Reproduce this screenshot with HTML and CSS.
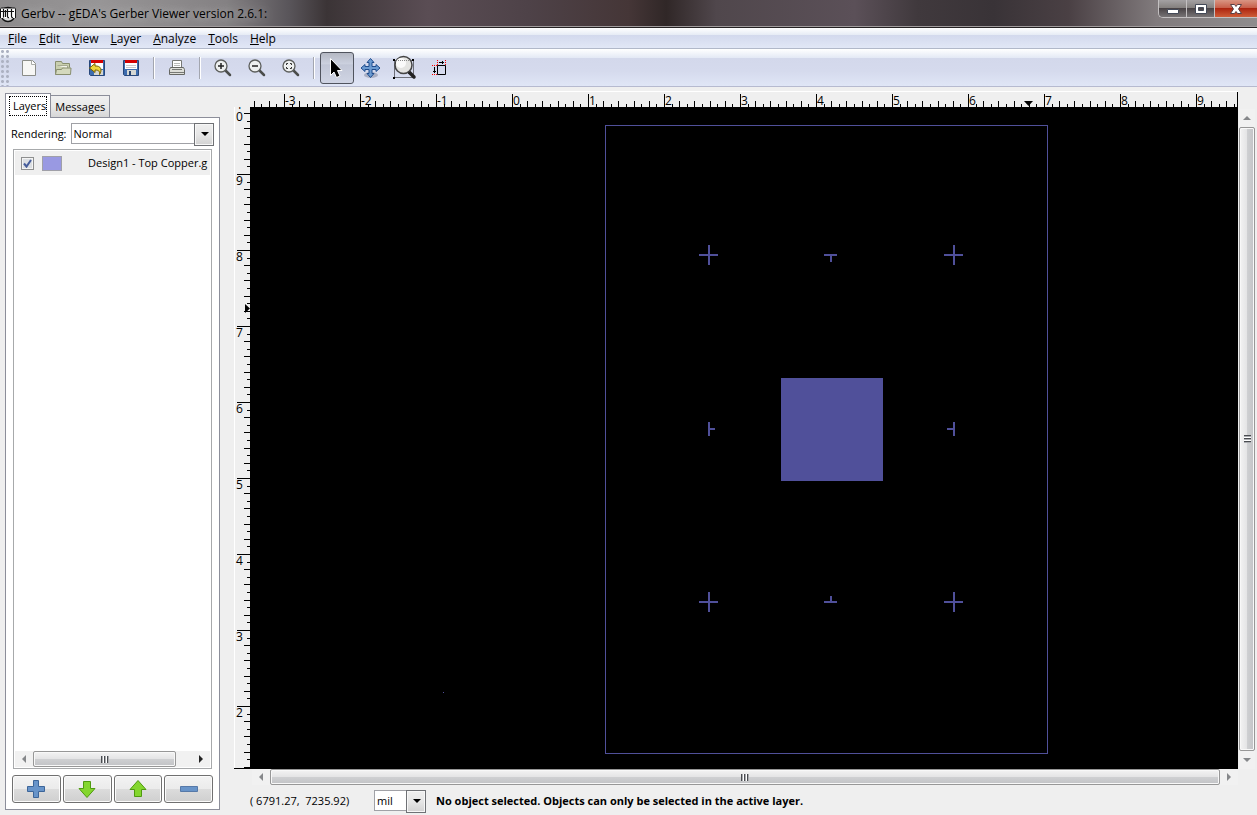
FILE: index.html
```html
<!DOCTYPE html>
<html lang="en">

<head>
    <meta charset="UTF-8">
    <meta name="viewport" content="width=device-width, initial-scale=1.0">
    <title>Gerbv</title>

    <link rel="stylesheet" href="styles.css">
</head>

<body>
    <div class="window">
        <header class="title-bar">
            <svg class="app-icon" width="16" height="18" viewBox="0 0 16 18">
                <circle cx="8" cy="9.500" r="7" fill="#ddd" stroke="#111" stroke-width="1.500" />
                <path d="M0 3h15.500v10H0z" fill="#fff" />
                <path d="M.500 13V4q0-1 1-1h13q1 0 1 1v9" fill="none" stroke="#111" />
                <path d="M1 6.500h13M3.500 4v8.500M7.500 4v7q0 2 1.500 1.500M11.500 4v7q0 2 1.500 1.500M5.500 5v7" fill="none" stroke="#111" stroke-width="1.200" />
            </svg>
            <h1 class="title">Gerbv -- gEDA's Gerber Viewer version 2.6.1:</h1>
            <div class="window-buttons">
                <button class="window-button" aria-label="Minimize">
                    <svg width="14" height="12" viewBox="0 0 14 12"><path d="M1.500 6.500h11v4h-11z" fill="#fff" stroke="#444a58" /></svg>
                </button>
                <button class="window-button" aria-label="Maximize">
                    <svg width="14" height="12" viewBox="0 0 14 12"><path d="M1.500 1.500h11v9h-11zM4.500 4.500v3h5v-3z" fill="#fff" fill-rule="evenodd" stroke="#444a58" /></svg>
                </button>
                <button class="window-button close-button" aria-label="Close">
                    <svg width="14" height="12" viewBox="0 0 14 12"><path d="M1.500 1.500h4L7 3.500l1.500-2h4L9.500 6l3 4.500h-4L7 8.500l-1.500 2h-4l3-4.500z" fill="#fff" stroke="#5b4146" /></svg>
                </button>
            </div>
        </header>

        <nav class="menu-bar">
            <button><u>F</u>ile</button>
            <button><u>E</u>dit</button>
            <button><u>V</u>iew</button>
            <button><u>L</u>ayer</button>
            <button><u>A</u>nalyze</button>
            <button><u>T</u>ools</button>
            <button><u>H</u>elp</button>
        </nav>

        <div class="toolbar">
            <span class="grip"></span>
            <button class="tool" aria-label="New">
                <svg width="24" height="24" viewBox="0 0 24 24">
                    <path d="M5.500 4.500h10l3 3v12h-13z" fill="#f7f7f5" stroke="#8b8d88" stroke-linejoin="round" />
                    <path d="M14.500 4.500v4h4" fill="#fff" stroke="#aaaca8" />
                </svg>
            </button>
            <button class="tool" aria-label="Open">
                <svg width="24" height="24" viewBox="0 0 24 24">
                    <path d="M4.500 18.500v-13h6l1 2h7v4" fill="#c9cfae" stroke="#888e6f" stroke-linejoin="round" />
                    <path d="M6.500 9.500h10v3" fill="#f3f4ea" stroke="#a6aa92" />
                    <path d="M5.500 13.500h5l1-1.500h8.500l-.5 6.500H4.500z" fill="#d4d9bd" stroke="#888e6f" stroke-linejoin="round" />
                </svg>
            </button>
            <button class="tool" aria-label="Revert">
                <svg width="24" height="24" viewBox="0 0 24 24">
                    <path d="M4.500 4.500h15v15h-14l-1-1z" fill="#3d6cae" stroke="#27477b" />
                    <path d="M6 5h12v8H6z" fill="#fff" />
                    <path d="M6 4h12v3H6z" fill="#d40000" />
                    <path d="M9 14h9v5H9z" fill="#d5d7d3" />
                    <path d="M4.500 12l5.500-4.500v2.500c6-.5 7.500 4 4.500 8.500.5-3.500-1-4.500-4.500-4.500v2.500z" fill="#edd43a" stroke="#765e00" />
                </svg>
            </button>
            <button class="tool" aria-label="Save">
                <svg width="24" height="24" viewBox="0 0 24 24">
                    <path d="M4.500 4.500h15v15h-14l-1-1z" fill="#3d6cae" stroke="#27477b" />
                    <path d="M6 5h12v8H6z" fill="#fff" />
                    <path d="M6 4h12v3H6z" fill="#d40000" />
                    <path d="M7 9.500h10M7 11.500h10" stroke="#c7c9cb" />
                    <path d="M8 14h9v5H8z" fill="#d5d7d3" />
                    <path d="M10 15h2v4h-2z" fill="#25426f" />
                </svg>
            </button>
            <span class="separator"></span>
            <button class="tool" aria-label="Print">
                <svg width="24" height="24" viewBox="0 0 24 24">
                    <path d="M7.500 12.500v-8h9v8" fill="#fff" stroke="#777975" />
                    <path d="M9 7.500h6M9 9.500h6" stroke="#b9bbb8" />
                    <path d="M5.500 11.500h13l1 2v5h-15v-5z" fill="#ddded9" stroke="#666864" stroke-linejoin="round" />
                    <path d="M7 13.500h10M5 16.500h14" stroke="#777975" />
                </svg>
            </button>
            <span class="separator"></span>
            <button class="tool" aria-label="Zoom in">
                <svg width="24" height="24" viewBox="0 0 24 24">
                    <path d="M14 14l5 5" stroke="#4b4d4b" stroke-width="2.500" stroke-linecap="round" />
                    <circle cx="10" cy="10" r="6" fill="#eef0f0" stroke="#5c5e5c" stroke-width="1.300" />
                    <path d="M7 10h6M10 7v6" stroke="#222" stroke-width="1.500" />
                </svg>
            </button>
            <button class="tool" aria-label="Zoom out">
                <svg width="24" height="24" viewBox="0 0 24 24">
                    <path d="M14 14l5 5" stroke="#4b4d4b" stroke-width="2.500" stroke-linecap="round" />
                    <circle cx="10" cy="10" r="6" fill="#eef0f0" stroke="#5c5e5c" stroke-width="1.300" />
                    <path d="M7 10h6" stroke="#222" stroke-width="1.500" />
                </svg>
            </button>
            <button class="tool" aria-label="Zoom fit">
                <svg width="24" height="24" viewBox="0 0 24 24">
                    <path d="M14 14l5 5" stroke="#4b4d4b" stroke-width="2.500" stroke-linecap="round" />
                    <circle cx="10" cy="10" r="6" fill="#eef0f0" stroke="#5c5e5c" stroke-width="1.300" />
                    <path d="M7.500 9v-1.500h1.500M11 7.500h1.500v1.500M12.500 11v1.500h-1.500M9 12.500h-1.500v-1.500" fill="none" stroke="#333" />
                </svg>
            </button>
            <span class="separator"></span>
            <button class="tool active" aria-label="Pointer">
                <svg width="24" height="24" viewBox="0 0 24 24">
                    <path d="M5.500 2.500v17l3.500-3.500 2.500 5.500 3.500-1.500-2.500-5.500h4.500z" fill="#000" stroke="#fff" />
                </svg>
            </button>
            <button class="tool" aria-label="Pan">
                <svg width="24" height="24" viewBox="0 0 24 24">
                    <ellipse cx="12" cy="19" rx="7" ry="3" fill="#a9afc3" />
                    <path d="M11.500 2.500l3.500 4h-2v4h4v-2l4 3.500-4 3.500v-2h-4v4h2l-3.500 4-3.500-4h2v-4H6v2L2 12l4-3.500v2h4v-4H8z" fill="#6c9bd1" stroke="#1f4c8d" stroke-linejoin="round" />
                </svg>
            </button>
            <button class="tool" aria-label="Zoom to area">
                <svg width="26" height="26" viewBox="0 0 26 26">
                    <path d="M2.500 5.500h19v17h-19z" fill="none" stroke="#000" stroke-dasharray="1 1" />
                    <path d="M1 4h2v2H1zM20 4h2v2h-2zM1 22h2v2H1z" />
                    <path d="M17 17l5 5" stroke="#222" stroke-width="3.500" stroke-linecap="round" />
                    <circle cx="11.500" cy="10" r="8.500" fill="#e4e4e2" stroke="#444" stroke-width="1.500" />
                    <circle cx="9" cy="8" r="5" fill="#fafafa" />
                    <path d="M6 5.500h11" stroke="#888" stroke-dasharray="1 1" />
                </svg>
            </button>
            <button class="tool" aria-label="Measure">
                <svg width="24" height="24" viewBox="0 0 24 24">
                    <path d="M10.500 9.500h8v9h-8z" fill="none" stroke="#000" />
                    <path d="M10.500 4v5M18.500 4v5M5 9.500h5M5 18.500h5" stroke="#f00" stroke-dasharray="1 1" />
                    <path d="M12 6.500h5M15.500 5v3M7.500 11v6M6 15.500h3" stroke="#000" />
                </svg>
            </button>
        </div>

        <main class="workspace">
            <aside class="sidebar">
                <div class="tabs">
                    <button class="tab selected"><span>Layers</span></button>
                    <button class="tab">Messages</button>
                </div>
                <div class="panel">
                    <div class="rendering">
                        <label for="rendering">Rendering:</label>
                        <div class="combo">
                            <select id="rendering">
                                <option>Normal</option>
                            </select>
                        </div>
                    </div>
                    <div class="layer-list">
                        <label class="layer">
                            <input type="checkbox" checked>
                            <span class="swatch"></span>
                            <span class="layer-name">Design1 - Top Copper.g</span>
                        </label>
                        <div class="scrollbar horizontal">
                            <button class="arrow left" aria-label="Scroll left"></button>
                            <div class="thumb"></div>
                            <span class="track"></span>
                            <button class="arrow right dark" aria-label="Scroll right"></button>
                        </div>
                    </div>
                    <div class="layer-buttons">
                        <button aria-label="Add layer">
                            <svg width="20" height="20" viewBox="0 0 20 20"><path d="M7.500 1.500h5v6h6v5h-6v6h-5v-6h-6v-5h6z" fill="#6894c9" stroke="#3c6599" /></svg>
                        </button>
                        <button aria-label="Move layer down">
                            <svg width="20" height="20" viewBox="0 0 20 20"><path d="M6.500 2.500h7v7h4.500l-8 9-8-9h4.500z" fill="#84d62e" stroke="#4f9a0f" stroke-linejoin="round" /></svg>
                        </button>
                        <button aria-label="Move layer up">
                            <svg width="20" height="20" viewBox="0 0 20 20"><path d="M6.500 17.500h7v-7h4.500l-8-9-8 9h4.500z" fill="#84d62e" stroke="#4f9a0f" stroke-linejoin="round" /></svg>
                        </button>
                        <button aria-label="Remove layer">
                            <svg width="20" height="20" viewBox="0 0 20 20"><path d="M1.500 7.500h17v5h-17z" fill="#6894c9" stroke="#5679a8" /></svg>
                        </button>
                    </div>
                </div>
            </aside>

            <section class="viewer">
                <div class="drawing">
                    <svg class="ruler ruler-top"></svg>
                    <svg class="ruler ruler-left"></svg>
                    <svg class="canvas">
                        <rect class="board" x="355.500" y="18.500" width="442" height="628" />
                        <rect class="copper" x="531" y="271" width="102" height="103" />
                        <path class="copper" d="M449 147h19v2h-19zM458 138h2v20h-2z" />
                        <path class="copper" d="M694 147h19v2h-19zM703 138h2v20h-2z" />
                        <path class="copper" d="M449 494h19v2h-19zM458 485h2v20h-2z" />
                        <path class="copper" d="M694 494h19v2h-19zM703 485h2v20h-2z" />
                        <path class="copper" d="M574 147h13v2h-13zM580 149h2v6h-2z" />
                        <path class="copper" d="M574 494h13v2h-13zM580 489h2v5h-2z" />
                        <path class="copper" d="M458 315h2v14h-2zM460 321h5v2h-5z" />
                        <path class="copper" d="M703 315h2v14h-2zM697 321h6v2h-6z" />
                        <path class="copper" d="M193 585h1v1h-1z" />
                    </svg>
                    <div class="scrollbar vertical">
                        <button class="arrow up" aria-label="Scroll up"></button>
                        <div class="thumb"></div>
                        <button class="arrow down" aria-label="Scroll down"></button>
                    </div>
                    <div class="scrollbar horizontal">
                        <button class="arrow left" aria-label="Scroll left"></button>
                        <div class="thumb"></div>
                        <button class="arrow right" aria-label="Scroll right"></button>
                    </div>
                </div>
                <footer class="status-bar">
                    <span class="coordinates">( 6791.27,&nbsp; 7235.92)</span>
                    <div class="combo unit">
                        <select aria-label="Unit">
                            <option>mil</option>
                        </select>
                    </div>
                    <strong>No object selected. Objects can only be selected in the active layer.</strong>
                </footer>
            </section>
        </main>
    </div>

    <script>
        const SVG = "http://www.w3.org/2000/svg";
        const INCH = 76;

        function add(parent, name, attributes, text) {
            let node = document.createElementNS(SVG, name);
            for (let key in attributes) {
                node.setAttribute(key, attributes[key]);
            }
            if (text) {
                node.textContent = text;
            }
            parent.appendChild(node);
        }

        // every tenth tick is a full one, the even ones are longer than the odd ones
        function tickSize(i) {
            if (i % 10 === 0) return 13;
            return i % 2 === 0 ? 6 : 3;
        }

        function drawTopRuler() {
            let ruler = document.querySelector(".ruler-top");
            let end = ruler.clientWidth;
            let zero = 262;
            for (let i = -34; zero + i * INCH / 10 < end - 1; i++) {
                let x = Math.round(zero + i * INCH / 10);
                let size = tickSize(i);
                add(ruler, "rect", { x: x, y: 16 - size, width: 1, height: size });
                if (i % 10 === 0) {
                    add(ruler, "text", { x: x + 1, y: 14 }, String(i / 10));
                }
            }
            add(ruler, "path", { d: "M774 10h9l-4.500 5z" });
        }

        function drawLeftRuler() {
            let ruler = document.querySelector(".ruler-left");
            let end = ruler.clientHeight;
            let ten = -9;
            for (let i = 0; ten + i * INCH / 10 < end; i++) {
                let y = Math.round(ten + i * INCH / 10);
                let size = tickSize(i);
                add(ruler, "rect", { x: 16 - size, y: y, width: size, height: 1 });
                if (i % 10 === 0) {
                    // digits are stacked, one below the other
                    String(10 - i / 10).split("").forEach(function (digit, n) {
                        add(ruler, "text", { x: 2, y: y + 11 + n * 12 }, digit);
                    });
                }
            }
            add(ruler, "path", { d: "M11 197v9l5-4.500z" });
        }

        drawTopRuler();
        drawLeftRuler();
    </script>
</body>

</html>
```
FILE: styles.css
```css
* {
    box-sizing: border-box;
}

body {
    margin: 0;
    background-color: #efefef;
    color: #000;
    font-family: "Open Sans", "Noto Sans", sans-serif;
    font-size: 11px;
    line-height: 16px;
}

button,
select {
    font: inherit;
    color: inherit;
    margin: 0;
    padding: 0;
}

svg {
    display: block;
    flex: none;
}

.window {
    height: 100vh;
    display: flex;
    flex-direction: column;
}

/* title bar */
.title-bar {
    height: 28px;
    flex: none;
    display: flex;
    align-items: center;
    gap: 5px;
    border-bottom: 1px solid #252223;
    box-shadow: inset 0 -1px #a19c9d;
    background: linear-gradient(to right, #8d8b8c, #979596 8%, #848183 18%, #59555a 23%, #3b3436 26%, #5a4d54 34%, #4e4248 42%, #453637 50%, #302727 53%, #50474c 57%, #5b5058 68%, #40393d 73%, #393337 79%, #4a4044 85%, #817b7d 92%, #8f8c8d);
}

.title {
    flex: 1;
    margin: 0;
    font-size: 12px;
    font-weight: normal;
    text-shadow: 0 0 8px #c5c5c5;
}

.window-buttons {
    align-self: flex-start;
    display: flex;
    height: 18px;
    border: 1px solid #c3c0c1;
    border-width: 0 0 1px 1px;
    border-radius: 0 0 0 5px;
    overflow: hidden;
}

.window-button {
    width: 28px;
    display: flex;
    justify-content: center;
    align-items: center;
    border: 0;
    border-right: 1px solid #c3c0c1;
    background: linear-gradient(#a4a1a3, #85817f 45%, #4a4447 50%, #777375);
}

.close-button {
    width: 42px;
    border-right: 0;
    background: linear-gradient(#d99583, #c8604b 45%, #ad2510 50%, #ce5d38);
}

/* menu */
.menu-bar {
    height: 21px;
    flex: none;
    display: flex;
    padding: 2px 0 0 2px;
    border-bottom: 1px solid #b1b8c9;
    background: linear-gradient(#fff, #e6ebf5 7px, #d3d9ed 7px, #e1e7f6);
}

.menu-bar button {
    padding: 0 6px;
    border: 0;
    background: none;
    font-size: 12px;
}

/* toolbar */
.toolbar {
    height: 38px;
    flex: none;
    display: flex;
    align-items: center;
    border-bottom: 1px solid #b6bacf;
    background: linear-gradient(#fff, #e3e9f5 9px, #d3d8eb 9px, #d5daed 22px, #e0e6f6);
}

.grip {
    width: 12px;
    align-self: stretch;
    background: radial-gradient(circle, #adb2c2 1px, transparent 2px) 0 0 / 5px 5px;
    border-right: 2px solid transparent;
    background-clip: padding-box;
}

.tool {
    width: 34px;
    height: 32px;
    display: flex;
    justify-content: center;
    align-items: center;
    border: 1px solid transparent;
    border-radius: 3px;
    background: none;
}

.tool.active {
    border-color: #50545e;
    background: linear-gradient(#b4b8c3, #cbd0de 35%, #c1c6d6 40%, #d0d5e4);
}

.separator {
    width: 2px;
    height: 22px;
    margin: 0 5px;
    background: linear-gradient(to right, #a3a6af 50%, #fff 50%);
}

/* layers */
.workspace {
    flex: 1;
    min-height: 0;
    display: flex;
    gap: 14px;
    padding: 4px 2px 0 5px;
}

.sidebar {
    width: 215px;
    flex: none;
    display: flex;
    flex-direction: column;
    padding: 2px 0 5px;
}

.tabs {
    display: flex;
    align-items: flex-end;
}

.tab {
    height: 22px;
    padding: 0 4px;
    border: 1px solid #8c8e9a;
    border-width: 1px 1px 0 0;
    background: linear-gradient(#f0f0f0, #e8e8e8 50%, #d6d6d6);
}

.tab.selected {
    height: 25px;
    padding: 0 3px;
    margin-bottom: -1px;
    border-width: 1px 1px 0 1px;
    background: #fff;
    z-index: 1;
}

.tab.selected span {
    display: block;
    height: 20px;
    padding: 0 0 0 3px;
    line-height: 18px;
    border: 1px dotted #000;
}

.panel {
    flex: 1;
    min-height: 0;
    display: flex;
    flex-direction: column;
    padding: 5px 5px 6px;
    border: 1px solid #8c8e9a;
    background-color: #fff;
}

.rendering {
    display: flex;
    align-items: center;
    gap: 4px;
}

.combo {
    position: relative;
    flex: 1;
}

.combo select {
    display: block;
    appearance: none;
    width: 100%;
    height: 21px;
    padding: 0 18px 0 2px;
    border: 1px solid #a0a1a6;
    border-radius: 0;
    background-color: #fff;
}

.combo::before {
    content: "";
    position: absolute;
    top: 0;
    right: 0;
    width: 18px;
    height: 21px;
    border: 1px solid #6f7175;
    box-shadow: inset 0 0 0 1px #f7f7f7;
    background: linear-gradient(#efefef, #e6e6e6 50%, #d2d2d2);
    pointer-events: none;
}

.combo::after {
    content: "";
    position: absolute;
    top: 9px;
    right: 5px;
    border: 4px solid transparent;
    border-top-color: #000;
    border-bottom: 0;
    pointer-events: none;
}

.layer-list {
    flex: 1;
    min-height: 0;
    margin: 5px 2px 6px;
    padding: 1px;
    display: flex;
    flex-direction: column;
    justify-content: space-between;
    border: 1px solid #a7a9ab;
}

.layer {
    display: flex;
    align-items: center;
    height: 24px;
    padding-left: 6px;
    background-color: #efefef;
    overflow: hidden;
}

.layer input {
    appearance: none;
    width: 13px;
    height: 13px;
    flex: none;
    margin: 0 8px 0 0;
    border: 1px solid #8e8f8f;
    box-shadow: inset 0 0 0 1px #f4f4f4;
    background-color: #dcdfe3;
}

.layer input:checked {
    background-image: url("data:image/svg+xml,%3Csvg xmlns='http://www.w3.org/2000/svg' viewBox='0 0 11 11'%3E%3Cpath d='M2 5.500l2.500 3L9 2' fill='none' stroke='%23465d9b' stroke-width='2'/%3E%3C/svg%3E");
}

.swatch {
    width: 20px;
    height: 15px;
    flex: none;
    margin-right: 26px;
    border: 1px solid #a0a0a8;
    background-color: #9999e2;
}

.layer-name {
    white-space: nowrap;
}

.layer-buttons {
    display: flex;
    gap: 2px;
    margin: 0 1px;
}

.layer-buttons button {
    flex: 1;
    height: 28px;
    display: flex;
    justify-content: center;
    align-items: center;
    border: 1px solid #707070;
    border-radius: 3px;
    box-shadow: inset 0 0 0 1px #fbfbfb;
    background: linear-gradient(#f3f3f3, #ebebeb 50%, #dcdcdc 50%, #cfcfcf);
}

/* scrollbars */
.scrollbar {
    display: flex;
    background-color: #f1f1f1;
}

.scrollbar.horizontal {
    height: 16px;
}

.scrollbar.vertical {
    flex-direction: column;
    width: 16px;
}

.arrow {
    width: 18px;
    height: 16px;
    display: flex;
    justify-content: center;
    align-items: center;
    border: 0;
    background: none;
    color: #85878a;
}

.arrow.dark {
    color: #222;
}

.arrow::before {
    content: "";
    border: 4px solid transparent;
}

.arrow.left::before {
    border-right-color: currentColor;
    border-left: 0;
}

.arrow.right::before {
    border-left-color: currentColor;
    border-right: 0;
}

.arrow.up,
.arrow.down {
    width: 16px;
    height: 18px;
}

.arrow.up::before {
    border-bottom-color: currentColor;
    border-top: 0;
}

.arrow.down::before {
    border-top-color: currentColor;
    border-bottom: 0;
}

.thumb {
    flex: 1;
    display: flex;
    justify-content: center;
    align-items: center;
    border: 1px solid #979797;
    border-radius: 2px;
    box-shadow: inset 0 0 0 1px #f8f8f8;
    background: linear-gradient(#f3f3f3, #e4e4e5 50%, #cfd0d2 50%, #c2c3c6);
}

.thumb::before {
    content: "";
    width: 8px;
    height: 7px;
    background: repeating-linear-gradient(to right, #4a4c50 0 1px, #aaacb0 1px 2px, #fff 2px 3px);
}

.vertical .thumb {
    background: linear-gradient(to right, #f3f3f3, #e4e4e5 50%, #cfd0d2 50%, #c2c3c6);
}

.vertical .thumb::before {
    width: 7px;
    height: 8px;
    background: repeating-linear-gradient(#4a4c50 0 1px, #aaacb0 1px 2px, #fff 2px 3px);
}

.layer-list .track {
    width: 16px;
}

/* drawing area */
.viewer {
    flex: 1;
    min-width: 0;
    display: flex;
    flex-direction: column;
}

.drawing {
    flex: 1;
    min-height: 0;
    display: grid;
    grid-template-columns: 16px 1fr 17px;
    grid-template-rows: 16px 1fr 17px;
}

.ruler {
    width: 100%;
    height: 100%;
    min-height: 0;
    overflow: hidden;
    font-size: 12px;
}

.ruler-top {
    grid-area: 1 / 2;
    overflow: visible;
    box-shadow: inset 0 1px #fff, inset -1px 0 #000;
}

.ruler-left {
    grid-area: 2 / 1;
    box-shadow: inset 1px 0 #fff;
    border-bottom: 1px solid #000;
}

.canvas {
    grid-area: 2 / 2;
    width: 100%;
    height: 100%;
    min-height: 0;
    background-color: #000;
}

.board {
    fill: none;
    stroke: #50509a;
}

.copper {
    fill: #50509a;
}

.drawing .vertical {
    grid-area: 2 / 3;
    justify-self: end;
    margin-top: 2px;
}

.drawing .horizontal {
    grid-area: 3 / 2;
    align-self: start;
    margin-left: 2px;
}

.status-bar {
    height: 29px;
    flex: none;
    display: flex;
    align-items: center;
    padding-left: 16px;
}

.coordinates {
    width: 124px;
    white-space: pre;
}

.unit {
    flex: none;
    width: 52px;
    margin-right: 10px;
}
```
